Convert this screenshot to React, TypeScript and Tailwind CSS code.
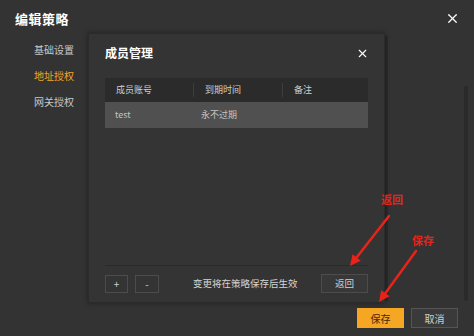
import React from "react";
import { X } from "lucide-react";

const NAV_ITEMS = ["基础设置", "地址授权", "网关授权"];

const Arrow = ({ x1, y1, x2, y2 }: { x1: number; y1: number; x2: number; y2: number }) => {
  // 箭头头部按方向计算
  const ang = Math.atan2(y2 - y1, x2 - x1);
  const len = 12;
  const w = 0.45;
  const p1 = [x2 - len * Math.cos(ang - w), y2 - len * Math.sin(ang - w)];
  const p2 = [x2 - len * Math.cos(ang + w), y2 - len * Math.sin(ang + w)];
  return (
    <>
      <line x1={x1} y1={y1} x2={x2 - 4 * Math.cos(ang)} y2={y2 - 4 * Math.sin(ang)} stroke="#e8231b" strokeWidth={2.5} strokeLinecap="round" />
      <polygon points={`${x2},${y2} ${p1[0]},${p1[1]} ${p2[0]},${p2[1]}`} fill="#e8231b" />
    </>
  );
};

const App = () => {
  return (
    <div
      className="relative w-[474px] h-[336px] overflow-hidden bg-[#333333] text-[#d8d8d8] flex flex-col"
      style={{ fontFamily: '"Noto Sans CJK SC", "Noto Sans", sans-serif' }}
    >
      <div className="flex items-center justify-between h-[36px] pl-[15px] pr-[14px] pt-[1px]">
        <span className="text-[13px] font-bold text-white tracking-[0.5px]">编辑策略</span>
        <X size={15} strokeWidth={2} className="text-white" />
      </div>

      <div className="flex flex-1">
        <div className="w-[88px] flex flex-col pl-[34px] pt-[5px] gap-[8px]">
          {NAV_ITEMS.map((item) => (
            <span
              key={item}
              className={`text-[10px] leading-[18px] ${item === "地址授权" ? "text-[#f5a623]" : "text-[#c8c8c8]"}`}
            >
              {item}
            </span>
          ))}
        </div>
        <div className="flex-1 flex">
          <div className="w-[300px] border-l border-r-[3px] border-[#2a2a2a]" />
          <div className="flex-1 flex justify-end pr-[6px] pt-[50px]">
            <div className="w-[4px] h-[215px] rounded-full bg-[#2a2a2a]" />
          </div>
        </div>
      </div>

      <div className="flex justify-end gap-[7px] h-[35px] pr-[16px] pt-[7px]">
        <button className="w-[47px] h-[20px] bg-[#f5a623] text-[#3a2a10] text-[10px]">保存</button>
        <button className="w-[47px] h-[20px] bg-[#3a3a3a] border border-[#555] text-[#cfcfcf] text-[10px]">取消</button>
      </div>

      {/* 成员管理弹窗 */}
      <div className="absolute left-[88px] top-[33px] w-[297px] h-[270px] bg-[#343434] border border-[#2b2b2b] shadow-[0_0_5px_rgba(0,0,0,0.4)] flex flex-col px-[16px]">
        <div className="flex items-start justify-between h-[44px] pt-[10px]">
          <span className="text-[12px] leading-[18px] font-bold text-white">成员管理</span>
          <X size={13} strokeWidth={2} className="text-white mt-[3px] mr-[-1px]" />
        </div>
        <div className="flex flex-col">
          <div className="flex items-center h-[24px] bg-[#2b2b2b] text-[9px] text-[#cfcfcf]">
            <div className="w-[89px] pl-[11px] border-r border-[#3d3d3d] leading-[14px]">成员账号</div>
            <div className="w-[89px] pl-[11px] border-r border-[#3d3d3d] leading-[14px]">到期时间</div>
            <div className="flex-1 pl-[11px] leading-[14px]">备注</div>
          </div>
          <div className="flex items-center h-[26px] bg-[#505050] text-[9px] text-[#c4c4c4]">
            <div className="w-[89px] pl-[10px]">test</div>
            <div className="w-[89px] pl-[7px]">永不过期</div>
            <div className="flex-1" />
          </div>
        </div>
        <div className="flex-1" />
        <div className="border-t border-[#2a2a2a] flex items-center h-[37px] pb-[1px]">
          <button className="w-[23px] h-[18px] border border-[#4c4c4c] text-[10px] text-[#cfcfcf] leading-none">+</button>
          <button className="w-[24px] h-[18px] ml-[7px] border border-[#4c4c4c] text-[10px] text-[#cfcfcf] leading-none">-</button>
          <span className="ml-[34px] text-[9.5px] text-[#d4d4d4]">变更将在策略保存后生效</span>
          <div className="flex-1" />
          <button className="w-[47px] h-[19px] bg-[#383838] border border-[#4c4c4c] text-[9.5px] text-[#cfcfcf]">返回</button>
        </div>
      </div>

      {/* 标注 */}
      <span className="absolute left-[381px] top-[191px] text-[11px] text-[#e8231b] font-bold">返回</span>
      <span className="absolute left-[412px] top-[232px] text-[11px] text-[#e8231b] font-bold">保存</span>
      <svg className="absolute left-0 top-0 pointer-events-none" width={474} height={336}>
        <Arrow x1={389} y1={216} x2={350} y2={266} />
        <Arrow x1={416} y1={251} x2={379} y2={302} />
      </svg>
    </div>
  );
};

export default App;
